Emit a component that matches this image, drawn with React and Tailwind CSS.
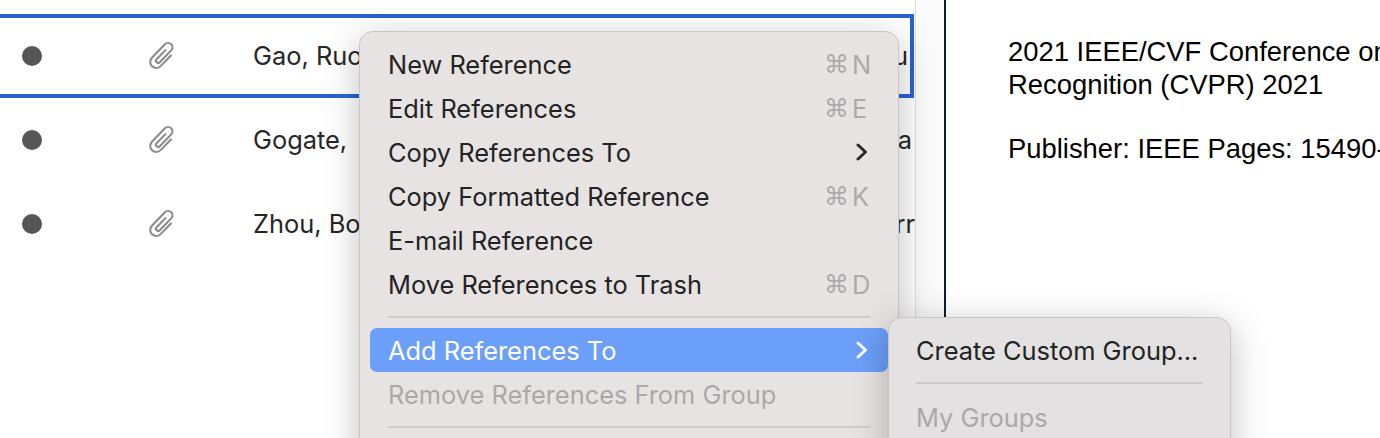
const rows = [
  { name: "Gao, Ruohan", tail: "u", pad: "pr-[2px]", selected: true },
  { name: "Gogate,\u00a0\u00a0Mandar", tail: "wa", pad: "pr-[3px]" },
  { name: "Zhou, Bolei", tail: "rr", pad: "" },
];

function Clip() {
  return (
    <svg width="44" height="44" viewBox="0 0 40 40" fill="none" stroke="#8b8b8b" strokeWidth="1.9" strokeLinecap="round">
      <g transform="rotate(44 20 20)">
        <path d="M25.500 14V27.500a5.500 5.500 0 0 1-11 0V10.500a4 4 0 0 1 8 0V25.500a2 2 0 0 1-4 0V14" />
      </g>
    </svg>
  );
}

function Chevron({ color = "#2a2a2a" }) {
  return (
    <svg width="12" height="18" viewBox="0 0 12 18" fill="none" stroke={color} strokeWidth="3" strokeLinecap="round" strokeLinejoin="round">
      <path d="M2 2L9.500 9L2 16" />
    </svg>
  );
}

function MenuItem({ label, keyName, arrow, active, disabled }) {
  return (
    <div
      className={`mx-[10px] flex h-[44px] items-center justify-between rounded-[7px] pl-[18px] ${
        keyName ? "pr-[16px]" : "pr-[20px]"
      } ${active ? "bg-[#6b9ff9] text-white" : disabled ? "text-[#aba8a8]" : "text-[#232323]"}`}
    >
      <span className="pt-[2px]">{label}</span>
      {keyName && (
        <span className="flex items-center gap-[3px] pt-[2px] text-[#adaaaa]">
          <span className="font-['DejaVu_Sans',sans-serif] text-[25px]">⌘</span>
          <span className="w-[20px]">{keyName}</span>
        </span>
      )}
      {arrow && <Chevron color={active ? "#ffffff" : "#2a2a2a"} />}
    </div>
  );
}

function Separator() {
  return <div className="my-[10px] ml-[28px] mr-[28px] h-[2px] bg-[#cfcbcb]" />;
}

export default function App() {
  return (
    <div className="relative flex h-[438px] w-[1380px] overflow-hidden bg-white font-['Inter',sans-serif] text-[25.4px]">
      <div className="w-[915px] shrink-0 pt-[14px] text-[#262626]">
        {rows.map((r) => (
          <div
            key={r.name}
            className={`flex h-[84px] items-center overflow-hidden ${
              r.selected ? "mr-px border-y-4 border-r-4 border-[#2a62d6]" : ""
            }`}
          >
            <div className="ml-[22px] h-[20px] w-[20px] shrink-0 rounded-full bg-[#565656]" />
            <div className="ml-[98px] flex w-[44px] shrink-0 justify-center">
              <Clip />
            </div>
            <div className="ml-[69px] flex flex-1 justify-between whitespace-nowrap">
              <span>{r.name}</span>
              <span className={r.pad}>{r.tail}</span>
            </div>
          </div>
        ))}
      </div>
      <div className="w-[29px] shrink-0 border-l border-[#dedede] bg-[#fafafa]" />
      <div className="min-w-0 flex-1 overflow-hidden whitespace-nowrap border-l-2 border-[#0d1b36] pl-[62px] pt-[35px] font-['Liberation_Sans',sans-serif] text-[27.4px] leading-[33px] text-black">
        <div>2021 IEEE/CVF Conference on Computer Vision and Pattern</div>
        <div>Recognition (CVPR) 2021</div>
        <div className="mt-[31px]">Publisher: IEEE Pages: 15490-15500</div>
      </div>

      {/* context menu */}
      <div className="absolute left-[359px] top-[31px] h-[460px] w-[540px] rounded-[14px] border border-[#c9c6c6] bg-[#e8e3e3] pt-[10px] shadow-[0_8px_36px_rgba(0,0,0,0.25)]">
        <MenuItem label="New Reference" keyName="N" />
        <MenuItem label="Edit References" keyName="E" />
        <MenuItem label="Copy References To" arrow />
        <MenuItem label="Copy Formatted Reference" keyName="K" />
        <MenuItem label="E-mail Reference" />
        <MenuItem label="Move References to Trash" keyName="D" />
        <Separator />
        <MenuItem label="Add References To" arrow active />
        <MenuItem label="Remove References From Group" disabled />
        <Separator />
      </div>

      {/* submenu */}
      <div className="absolute left-[888px] top-[317px] h-[160px] w-[343px] rounded-[14px] border border-[#c9c6c6] bg-[#e3e1e2] pt-[11px] shadow-[0_8px_36px_rgba(0,0,0,0.25)]">
        <div className="flex h-[44px] items-center pl-[27px] text-[#232323]">Create Custom Group...</div>
        <div className="mx-[27px] mt-[9px] h-[2px] bg-[#cbc9c9]" />
        <div className="mt-[12px] flex h-[44px] items-center pl-[27px] text-[#aaa8a8]">My Groups</div>
      </div>
    </div>
  );
}
